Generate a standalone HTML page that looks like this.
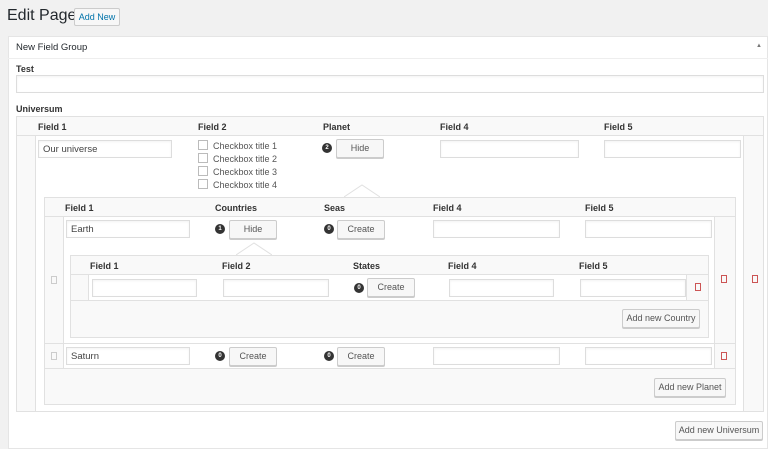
<!DOCTYPE html>
<html><head><style>
*{box-sizing:border-box;margin:0;padding:0}
body{width:768px;height:449px;background:#f1f1f1;font-family:"Liberation Sans",sans-serif;color:#555;font-size:9px;position:relative;overflow:hidden}
.a{position:absolute}
.b{font-weight:bold;color:#333;font-size:9px}
.in{position:absolute;background:#fff;border:1px solid #ddd;box-shadow:inset 0 1px 2px rgba(0,0,0,.05);height:18px;padding:3px 4px;font-size:9.5px;color:#444}
.btn{position:absolute;background:#f7f7f7;border:1px solid #ccc;border-radius:2px;box-shadow:0 1px 0 #ccc;height:19px;font-size:9px;color:#555;text-align:center;line-height:17px}
.bd{position:absolute;width:10px;height:10px;border-radius:50%;background:#333;color:#fff;font-size:6px;font-weight:bold;text-align:center;line-height:10px}
.box{position:absolute;border:1px solid #e1e1e1}
.cb{position:absolute;width:10px;height:10px;border:1px solid #bbb;background:#fff}
.rm{position:absolute;width:6px;height:8px;border:1px solid #c55}
.hk{position:absolute;width:6px;height:8px;border:1px solid #ccc}
</style></head><body>
<div class="a" style="left:7px;top:7px;font-size:16px;color:#23282d">Edit Page</div>
<div class="a" style="left:74px;top:8px;width:46px;height:18px;border:1px solid #ccc;background:#f7f7f7;color:#0073aa;font-size:9px;text-align:center;line-height:16px;border-radius:2px">Add New</div>

<div class="a" style="left:8px;top:36px;width:760px;height:413px;background:#fff;border:1px solid #e5e5e5"></div>
<div class="a" style="left:8px;top:58px;width:760px;height:1px;background:#eee"></div>
<div class="a" style="left:16px;top:42px;font-size:9.5px;color:#23282d">New Field Group</div>
<div class="a" style="left:756px;top:43px;font-size:6px;color:#777">▲</div>

<div class="a b" style="left:16px;top:64px">Test</div>
<div class="in" style="left:16px;top:75px;width:748px;height:18px"></div>
<div class="a b" style="left:16px;top:104px">Universum</div>

<div class="box" style="left:16px;top:116px;width:748px;height:296px;background:#fff"></div>
<div class="a" style="left:17px;top:117px;width:746px;height:19px;background:#f9f9f9;border-bottom:1px solid #e1e1e1"></div>
<div class="a" style="left:17px;top:136px;width:19px;height:275px;background:#f9f9f9;border-right:1px solid #e1e1e1"></div>
<div class="a" style="left:743px;top:136px;width:20px;height:275px;background:#f9f9f9;border-left:1px solid #e1e1e1"></div>
<div class="a b" style="left:38px;top:122px">Field 1</div>
<div class="a b" style="left:198px;top:122px">Field 2</div>
<div class="a b" style="left:323px;top:122px">Planet</div>
<div class="a b" style="left:440px;top:122px">Field 4</div>
<div class="a b" style="left:604px;top:122px">Field 5</div>
<div class="in" style="left:38px;top:140px;width:134px">Our universe</div>
<div class="cb" style="left:198px;top:140px"></div><div class="a" style="left:213px;top:141px">Checkbox title 1</div>
<div class="cb" style="left:198px;top:153px"></div><div class="a" style="left:213px;top:154px">Checkbox title 2</div>
<div class="cb" style="left:198px;top:166px"></div><div class="a" style="left:213px;top:167px">Checkbox title 3</div>
<div class="cb" style="left:198px;top:179px"></div><div class="a" style="left:213px;top:180px">Checkbox title 4</div>
<div class="bd" style="left:322px;top:143px">2</div>
<div class="btn" style="left:336px;top:139px;width:48px">Hide</div>
<div class="in" style="left:440px;top:140px;width:139px"></div>
<div class="in" style="left:604px;top:140px;width:137px"></div>
<div class="rm" style="left:752px;top:275px"></div>
<svg class="a" style="left:344px;top:184px" width="36" height="14"><path d="M0 13 L18 1 L36 13" fill="#fff" stroke="#e1e1e1"/></svg>

<div class="box" style="left:44px;top:197px;width:692px;height:208px;background:#f9f9f9"></div>
<div class="a" style="left:45px;top:198px;width:690px;height:19px;border-bottom:1px solid #e1e1e1"></div>
<div class="a" style="left:45px;top:217px;width:19px;height:152px;border-right:1px solid #e1e1e1"></div>
<div class="a" style="left:64px;top:217px;width:651px;height:151px;background:#fff"></div>
<div class="a" style="left:714px;top:217px;width:1px;height:151px;background:#e1e1e1"></div>
<div class="a" style="left:45px;top:343px;width:690px;height:1px;background:#e1e1e1"></div>
<div class="a" style="left:45px;top:368px;width:690px;height:1px;background:#e1e1e1"></div>
<div class="a b" style="left:65px;top:203px">Field 1</div>
<div class="a b" style="left:215px;top:203px">Countries</div>
<div class="a b" style="left:324px;top:203px">Seas</div>
<div class="a b" style="left:433px;top:203px">Field 4</div>
<div class="a b" style="left:585px;top:203px">Field 5</div>
<div class="in" style="left:66px;top:220px;width:124px">Earth</div>
<div class="bd" style="left:215px;top:224px">1</div>
<div class="btn" style="left:229px;top:220px;width:48px">Hide</div>
<div class="bd" style="left:324px;top:224px">0</div>
<div class="btn" style="left:337px;top:220px;width:48px">Create</div>
<div class="in" style="left:433px;top:220px;width:127px"></div>
<div class="in" style="left:585px;top:220px;width:127px"></div>
<div class="hk" style="left:51px;top:276px"></div>
<div class="rm" style="left:721px;top:275px"></div>
<svg class="a" style="left:236px;top:242px" width="36" height="14"><path d="M0 13 L18 1 L36 13" fill="#fff" stroke="#e1e1e1"/></svg>

<div class="box" style="left:70px;top:255px;width:639px;height:83px;background:#f9f9f9"></div>
<div class="a" style="left:71px;top:256px;width:637px;height:19px;border-bottom:1px solid #e1e1e1"></div>
<div class="a" style="left:88px;top:275px;width:599px;height:25px;background:#fff;border-left:1px solid #e1e1e1;border-right:1px solid #e1e1e1"></div>
<div class="a" style="left:71px;top:300px;width:637px;height:1px;background:#e1e1e1"></div>
<div class="a b" style="left:90px;top:261px">Field 1</div>
<div class="a b" style="left:222px;top:261px">Field 2</div>
<div class="a b" style="left:353px;top:261px">States</div>
<div class="a b" style="left:448px;top:261px">Field 4</div>
<div class="a b" style="left:579px;top:261px">Field 5</div>
<div class="in" style="left:92px;top:279px;width:105px"></div>
<div class="in" style="left:223px;top:279px;width:106px"></div>
<div class="bd" style="left:354px;top:283px">0</div>
<div class="btn" style="left:367px;top:278px;width:48px">Create</div>
<div class="in" style="left:449px;top:279px;width:105px"></div>
<div class="in" style="left:580px;top:279px;width:106px"></div>
<div class="rm" style="left:695px;top:283px"></div>
<div class="btn" style="left:622px;top:309px;width:78px">Add new Country</div>

<div class="hk" style="left:51px;top:352px"></div>
<div class="in" style="left:66px;top:347px;width:124px">Saturn</div>
<div class="bd" style="left:215px;top:351px">0</div>
<div class="btn" style="left:229px;top:347px;width:48px">Create</div>
<div class="bd" style="left:324px;top:351px">0</div>
<div class="btn" style="left:337px;top:347px;width:48px">Create</div>
<div class="in" style="left:433px;top:347px;width:127px"></div>
<div class="in" style="left:585px;top:347px;width:127px"></div>
<div class="rm" style="left:721px;top:352px"></div>
<div class="btn" style="left:654px;top:378px;width:72px">Add new Planet</div>

<div class="btn" style="left:675px;top:421px;width:88px">Add new Universum</div>
</body></html>
